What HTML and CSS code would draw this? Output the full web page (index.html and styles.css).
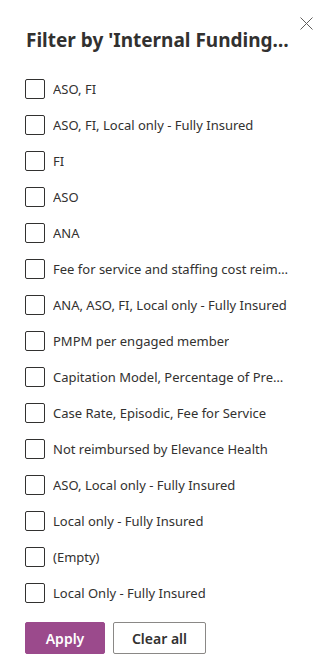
FILE: index.html
```html
<!DOCTYPE html>
<html lang="en">
<head>
    <meta charset="UTF-8"/>
    <meta name="viewport" content="width=device-width, initial-scale=1.0"/>
    <title>Filter</title>
    <link rel="stylesheet" href="styles.css">
</head>
<body>
<div class="panel">
    <button type="button" class="close-btn" aria-label="Close">
        <svg width="13" height="13" viewBox="0 0 13 13">
            <path d="M0.5 0.5 L12.5 12.5 M12.5 0.5 L0.5 12.5" stroke="#605e5c" stroke-width="1" fill="none"/>
        </svg>
    </button>
    <h2 class="panel-title">Filter by 'Internal Funding Model'</h2>
    <ul class="option-list">
        <li class="option"><span class="box"></span><span class="label">ASO, FI</span></li>
        <li class="option"><span class="box"></span><span class="label">ASO, FI, Local only - Fully Insured</span></li>
        <li class="option"><span class="box"></span><span class="label">FI</span></li>
        <li class="option"><span class="box"></span><span class="label">ASO</span></li>
        <li class="option"><span class="box"></span><span class="label">ANA</span></li>
        <li class="option"><span class="box"></span><span class="label">Fee for service and staffing cost reimbursement</span></li>
        <li class="option"><span class="box"></span><span class="label">ANA, ASO, FI, Local only - Fully Insured</span></li>
        <li class="option"><span class="box"></span><span class="label">PMPM per engaged member</span></li>
        <li class="option"><span class="box"></span><span class="label">Capitation Model, Percentage of Premium</span></li>
        <li class="option"><span class="box"></span><span class="label">Case Rate, Episodic, Fee for Service</span></li>
        <li class="option"><span class="box"></span><span class="label">Not reimbursed by Elevance Health</span></li>
        <li class="option"><span class="box"></span><span class="label">ASO, Local only - Fully Insured</span></li>
        <li class="option"><span class="box"></span><span class="label">Local only - Fully Insured</span></li>
        <li class="option"><span class="box"></span><span class="label">(Empty)</span></li>
        <li class="option"><span class="box"></span><span class="label">Local Only - Fully Insured</span></li>
    </ul>
    <div class="actions">
        <button type="button" class="btn btn-primary">Apply</button>
        <button type="button" class="btn btn-default">Clear all</button>
    </div>
</div>
</body>
</html>
```
FILE: styles.css
```css
/* 页面基础 */
body {
    margin: 0;
    background-color: #fff;
    font-family: "Noto Sans", "Open Sans", sans-serif;
    color: #323130;
}

/* 筛选面板 */
.panel {
    position: relative;
    width: 325px;
    height: 662px;
    box-sizing: border-box;
    padding: 26px 33px 0 25px;
}

.close-btn {
    position: absolute;
    top: 17px;
    right: 12px;
    padding: 0;
    border: none;
    background: none;
    line-height: 0;
    cursor: pointer;
}

.panel-title {
    margin: 0 0 17px 1px;
    font-size: 19px;
    font-weight: 700;
    line-height: 28px;
    white-space: nowrap;
    overflow: hidden;
    text-overflow: ellipsis;
}

/* 选项列表 */
.option-list {
    list-style: none;
    margin: 0;
    padding: 0;
}

.option {
    display: flex;
    align-items: center;
    height: 36px;
}

.box {
    flex: none;
    width: 18px;
    height: 18px;
    border: 1px solid #323130;
    border-radius: 2px;
}

.label {
    margin-left: 8px;
    font-size: 13px;
    white-space: nowrap;
    overflow: hidden;
    text-overflow: ellipsis;
}

/* 底部按钮 */
.actions {
    display: flex;
    gap: 8px;
    margin-top: 11px;
}

.btn {
    height: 32px;
    box-sizing: border-box;
    border-radius: 2px;
    font-family: inherit;
    font-size: 14px;
    font-weight: 600;
    cursor: pointer;
}

.btn-primary {
    width: 80px;
    background-color: #9b4a8c;
    border: 1px solid #9b4a8c;
    color: #fff;
}

.btn-default {
    width: 93px;
    background-color: #fff;
    border: 1px solid #8a8886;
    color: #323130;
}
```
